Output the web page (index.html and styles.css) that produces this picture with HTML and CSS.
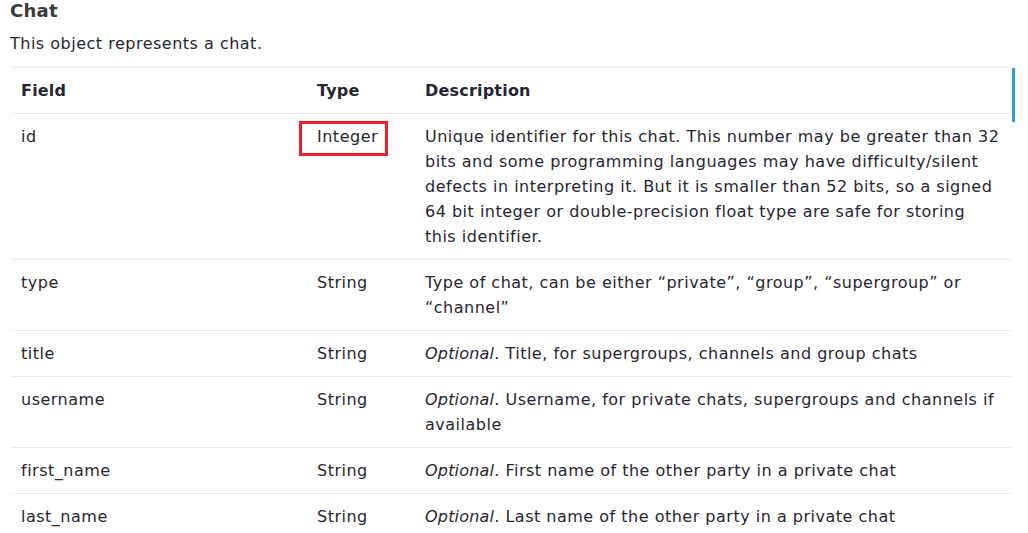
FILE: index.html
```html
<!DOCTYPE html>
<html>
<head>
<meta charset="utf-8">
<link rel="stylesheet" href="styles.css">
</head>
<body>
<div class="page">
  <h4 class="title">Chat</h4>
  <p class="lead">This object represents a chat.</p>
  <div class="table-wrap">
    <table class="fields">
      <thead>
        <tr><th class="c-field">Field</th><th class="c-type">Type</th><th>Description</th></tr>
      </thead>
      <tbody>
        <tr><td>id</td><td><span class="marked">Integer</span></td><td>Unique identifier for this chat. This number may be greater than 32 bits and some programming languages may have difficulty/silent defects in interpreting it. But it is smaller than 52 bits, so a signed 64 bit integer or double-precision float type are safe for storing this identifier.</td></tr>
        <tr><td>type</td><td>String</td><td>Type of chat, can be either “private”, “group”, “supergroup” or “channel”</td></tr>
        <tr><td>title</td><td>String</td><td><em>Optional</em>. Title, for supergroups, channels and group chats</td></tr>
        <tr><td>username</td><td>String</td><td><em>Optional</em>. Username, for private chats, supergroups and channels if available</td></tr>
        <tr><td>first_name</td><td>String</td><td><em>Optional</em>. First name of the other party in a private chat</td></tr>
        <tr><td>last_name</td><td>String</td><td><em>Optional</em>. Last name of the other party in a private chat</td></tr>
      </tbody>
    </table>
    <div class="scroll-ind"></div>
  </div>
</div>
</body>
</html>
```
FILE: styles.css
```css
html, body {
  margin: 0;
  padding: 0;
  background: #fff;
}
body {
  font-family: "DejaVu Sans", "Liberation Sans", sans-serif;
  font-size: 16px;
  line-height: 25px;
  letter-spacing: 0.5px;
  color: #262630;
}
.page {
  padding: 0 17px 0 10px;
}
.title {
  margin: 0;
  font-size: 18px;
  font-weight: bold;
  line-height: 22px;
  letter-spacing: 0.3px;
  color: #3a3a3a;
}
.lead {
  margin: 9px 0 11px;
}
.table-wrap {
  position: relative;
}
.fields {
  width: 100%;
  border-collapse: collapse;
  border-top: 1px solid #eaeaea;
}
.fields th, .fields td {
  text-align: left;
  vertical-align: top;
  padding: 10px 11px 10px 11px;
  border-bottom: 1px solid #eaeaea;
}
.fields th {
  font-weight: bold;
  letter-spacing: 0.2px;
}
.c-field { width: 274px; }
.c-type { width: 86px; }
.fields em {
  font-style: italic;
  letter-spacing: 0.2px;
}
.marked {
  position: relative;
}
.marked::after {
  content: "";
  position: absolute;
  left: -18px;
  top: -6px;
  width: 83px;
  height: 29px;
  border: 3px solid #e8202a;
}
.scroll-ind {
  position: absolute;
  right: -4px;
  top: 1px;
  width: 3px;
  height: 54px;
  background: #2a9fd8;
}
```
